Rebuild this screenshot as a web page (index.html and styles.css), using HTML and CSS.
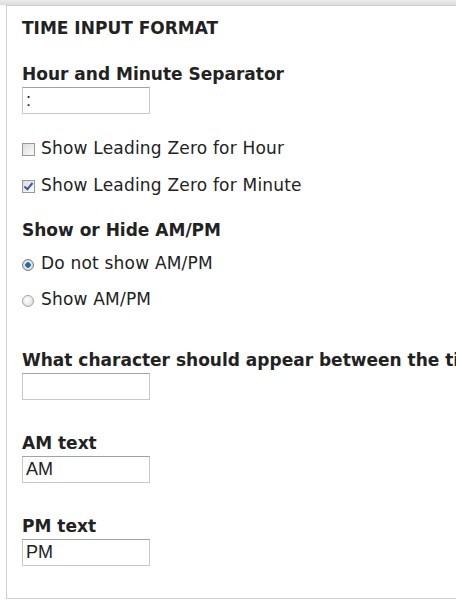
FILE: index.html
```html
<!DOCTYPE html>
<html>
<head>
<meta charset="utf-8">
<link rel="stylesheet" href="styles.css">
</head>
<body>
<div class="topbar"></div>
<div class="panel">
  <h2 class="title">TIME INPUT FORMAT</h2>
  <label class="lbl lbl-hour">Hour and Minute Separator</label>
  <input class="txt" type="text" value=":">
  <label class="opt opt-first"><input class="cb" type="checkbox"><span>Show Leading Zero for Hour</span></label>
  <label class="opt opt-next"><input class="cb" type="checkbox" checked><span>Show Leading Zero for Minute</span></label>
  <div class="lbl lbl-ampm">Show or Hide AM/PM</div>
  <label class="opt opt-radio1"><input class="rd" type="radio" name="ampm" checked><span>Do not show AM/PM</span></label>
  <label class="opt opt-next2"><input class="rd" type="radio" name="ampm"><span>Show AM/PM</span></label>
  <label class="lbl lbl-what">What character should appear between the time and AM/PM?</label>
  <input class="txt" type="text" value="">
  <label class="lbl lbl-am">AM text</label>
  <input class="txt" type="text" value="AM">
  <label class="lbl lbl-pm">PM text</label>
  <input class="txt" type="text" value="PM">
</div>
</body>
</html>
```

FILE: styles.css
```css
html, body {
  margin: 0;
  padding: 0;
  background: #fff;
  overflow: hidden;
  width: 456px;
  height: 605px;
}
body {
  font-family: "DejaVu Sans", Verdana, sans-serif;
  font-size: 17px;
  line-height: 18px;
  color: #222;
}
.topbar {
  height: 5px;
  background: linear-gradient(#ececec, #dcdcdc);
}
.panel {
  margin-left: 6px;
  width: 600px;
  border: 1px solid #cfcfcf;
  border-right: none;
  padding: 13px 0 32px 15px;
  display: flex;
  flex-direction: column;
  align-items: flex-start;
  white-space: nowrap;
}
.title {
  margin: 0;
  font-size: 17px;
  font-weight: bold;
  line-height: 18px;
  height: 20px;
}
.lbl {
  display: block;
  font-weight: bold;
  line-height: 18px;
  height: 20px;
}
.lbl-hour { margin-top: 26px; }
.lbl-ampm { margin-top: 25px; }
.lbl-what { margin-top: 41px; }
.lbl-am { margin-top: 34px; }
.lbl-pm { margin-top: 34px; }
.txt {
  box-sizing: border-box;
  width: 128px;
  height: 27px;
  margin: 2px 0 0 0;
  padding: 0 3px;
  border: 1px solid #c8c8c8;
  border-top-color: #a2a2a2;
  border-radius: 0;
  font-family: "Liberation Sans", Arial, sans-serif;
  font-size: 18px;
  color: #222;
  background: #fff;
  outline: none;
}
.opt {
  display: flex;
  align-items: flex-start;
  height: 20px;
  line-height: 18px;
  letter-spacing: 0.2px;
}
.opt-first { margin-top: 25px; }
.opt-next { margin-top: 17px; }
.opt-radio1 { margin-top: 13px; }
.opt-next2 { margin-top: 16px; }
.cb {
  appearance: none;
  -webkit-appearance: none;
  box-sizing: border-box;
  flex: none;
  width: 13px;
  height: 13px;
  margin: 4px 6px 0 0;
  border: 1px solid #999;
  background: linear-gradient(135deg, #dcdcdc, #fbfbfb);
  position: relative;
}
.cb:checked::after {
  content: "";
  position: absolute;
  left: 3px;
  top: 0px;
  width: 3px;
  height: 7px;
  border: solid #3d5a9c;
  border-width: 0 2px 2px 0;
  transform: rotate(40deg);
}
.rd {
  appearance: none;
  -webkit-appearance: none;
  box-sizing: border-box;
  flex: none;
  width: 12px;
  height: 12px;
  margin: 5px 7px 0 0;
  border-radius: 50%;
  border: 1px solid #a5a5a5;
  background: radial-gradient(circle at 40% 40%, #fff, #d6d6d6);
  position: relative;
}
.rd:checked {
  background: radial-gradient(circle at 50% 50%, #1d6fa8 0, #1d6fa8 2.5px, #e8e8e8 3px, #c9c9c9 100%);
  border-color: #7e7e7e;
}
```
